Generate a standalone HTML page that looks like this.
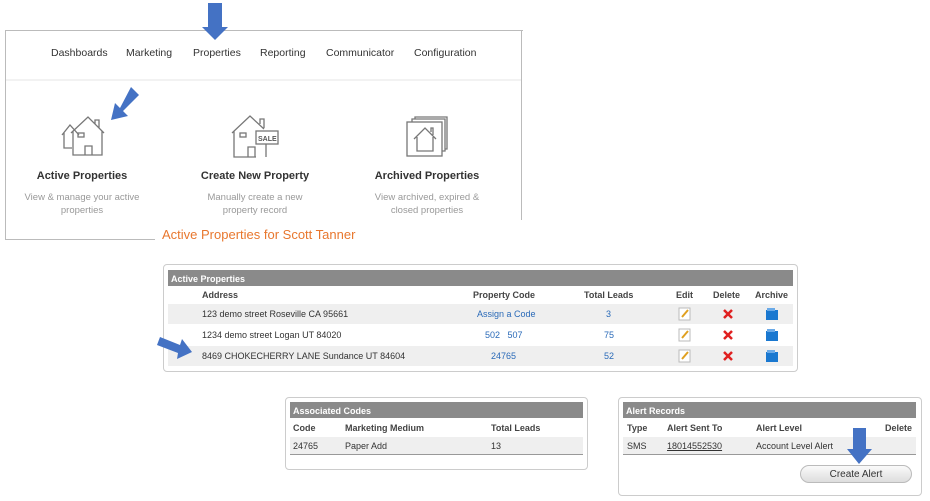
<!DOCTYPE html>
<html><head><meta charset="utf-8"><style>
*{margin:0;padding:0;box-sizing:border-box}
body{width:930px;height:501px;background:#fff;font-family:"Liberation Sans",sans-serif;position:relative;overflow:hidden;color:#333}
.a{position:absolute;white-space:nowrap}
.nav{font-size:10.5px;color:#333;top:47px}
.t{font-size:11px;font-weight:bold;color:#333;top:170px;text-align:center;width:160px}
.d{font-size:9.5px;color:#999;top:191px;text-align:center;width:160px;line-height:13px;white-space:normal}
.box{position:absolute;border:1px solid #ccc;border-radius:4px}
.bar{position:absolute;background:#8a8a8a;color:#fff;font-size:9px;font-weight:bold;padding:4px 3px;height:16px}
.s{font-size:9px;color:#333}
.h{font-size:9px;font-weight:bold;color:#444}
.l{color:#2a6ab8}
.row{position:absolute;background:#efefef}
</style></head><body>
<div style="position:absolute;left:5px;top:30px;width:518px;height:210px;border-top:1px solid #bbb;border-left:1px solid #bbb"></div>
<div style="position:absolute;left:521px;top:30px;width:1px;height:190px;background:#bbb"></div>
<div style="position:absolute;left:5px;top:239px;width:150px;height:1px;background:#bbb"></div>
<div style="position:absolute;left:6px;top:79px;width:515px;height:2px;background:#f2f2f2"></div>
<div class="a nav" style="left:51px">Dashboards</div>
<div class="a nav" style="left:126px">Marketing</div>
<div class="a nav" style="left:193px">Properties</div>
<div class="a nav" style="left:260px">Reporting</div>
<div class="a nav" style="left:326px">Communicator</div>
<div class="a nav" style="left:414px">Configuration</div>
<div class="a t" style="left:2px">Active Properties</div>
<div class="a t" style="left:175px">Create New Property</div>
<div class="a t" style="left:347px">Archived Properties</div>
<div class="a d" style="left:2px;padding:0 8px">View &amp; manage your active properties</div>
<div class="a d" style="left:175px;padding:0 24px">Manually create a new property record</div>
<div class="a d" style="left:347px;padding:0 16px">View archived, expired &amp; closed properties</div>
<div class="a" style="left:162px;top:227px;font-size:13px;color:#e8772e">Active Properties for Scott Tanner</div>

<div class="box" style="left:163px;top:264px;width:635px;height:108px"></div>
<div class="bar" style="left:168px;top:270px;width:625px">Active Properties</div>
<div class="a h" style="left:202px;top:290px">Address</div>
<div class="a h" style="left:473px;top:290px">Property Code</div>
<div class="a h" style="left:584px;top:290px">Total Leads</div>
<div class="a h" style="left:676px;top:290px">Edit</div>
<div class="a h" style="left:713px;top:290px">Delete</div>
<div class="a h" style="left:755px;top:290px">Archive</div>
<div class="row" style="left:168px;top:304px;width:625px;height:20px"></div>
<div class="row" style="left:168px;top:346px;width:625px;height:20px"></div>
<div class="a s" style="left:202px;top:309px">123 demo street Roseville CA 95661</div>
<div class="a s" style="left:202px;top:330px">1234 demo street Logan UT 84020</div>
<div class="a s" style="left:202px;top:351px">8469 CHOKECHERRY LANE Sundance UT 84604</div>
<div class="a s l" style="left:477px;top:309px">Assign a Code</div>
<div class="a s l" style="left:485px;top:330px">502&nbsp;&nbsp;&nbsp;507</div>
<div class="a s l" style="left:491px;top:351px">24765</div>
<div class="a s l" style="left:606px;top:309px">3</div>
<div class="a s l" style="left:604px;top:330px">75</div>
<div class="a s l" style="left:604px;top:351px">52</div>

<div class="box" style="left:285px;top:397px;width:303px;height:73px"></div>
<div class="bar" style="left:290px;top:402px;width:293px">Associated Codes</div>
<div class="a h" style="left:293px;top:423px">Code</div>
<div class="a h" style="left:345px;top:423px">Marketing Medium</div>
<div class="a h" style="left:491px;top:423px">Total Leads</div>
<div class="row" style="left:290px;top:437px;width:293px;height:18px;border-bottom:1px solid #999"></div>
<div class="a s" style="left:293px;top:441px">24765</div>
<div class="a s" style="left:345px;top:441px">Paper Add</div>
<div class="a s" style="left:491px;top:441px">13</div>

<div class="box" style="left:618px;top:397px;width:304px;height:99px"></div>
<div class="bar" style="left:623px;top:402px;width:293px">Alert Records</div>
<div class="a h" style="left:627px;top:423px">Type</div>
<div class="a h" style="left:667px;top:423px">Alert Sent To</div>
<div class="a h" style="left:756px;top:423px">Alert Level</div>
<div class="a h" style="left:885px;top:423px">Delete</div>
<div class="row" style="left:623px;top:437px;width:293px;height:18px;border-bottom:1px solid #999"></div>
<div class="a s" style="left:627px;top:441px">SMS</div>
<div class="a s" style="left:667px;top:441px;text-decoration:underline">18014552530</div>
<div class="a s" style="left:756px;top:441px">Account Level Alert</div>
<div class="a" style="left:800px;top:465px;width:112px;height:18px;border:1px solid #bbb;border-radius:9px;background:linear-gradient(#fafafa,#ddd);font-size:10px;text-align:center;line-height:17px;color:#333">Create Alert</div>

<svg width="930" height="501" style="position:absolute;left:0;top:0" fill="none">
<g stroke="#777" stroke-width="1.3">
<path d="M62 135 L70 125 L79 135 M64 133 V148 H72"/>
<path d="M71 133 L88 117 L104 133 M73 131 V155 H102 V131 M95 124 V120 H99 V128"/>
<rect x="78" y="133" width="6" height="4"/><path d="M85 155 V146 H92 V155"/>
<path d="M232 133 L250 116 L264 129 M234 131 V157 H256 M260 124 V119 H264 V128"/>
<rect x="240" y="133" width="6" height="4"/><path d="M248 157 V147 H255 V157"/>
<rect x="256" y="131" width="22" height="13"/><path d="M266 144 V157"/>
<rect x="407" y="122" width="35" height="34"/><path d="M412 122 V119 H445 V151 H442 M415 119 V117 H447 V149 H445"/>
<path d="M414 139 L425 128 L436 139 M417 137 V151 H433 V137 M431 132 V128 H433 V135"/>
</g>
<text x="258" y="141" font-size="7" font-weight="bold" fill="#555" font-family="Liberation Sans">SALE</text>
<g fill="#4472c4">
<path d="M208 3 H222 V27 H228 L215 40 L202 27 H208 Z"/>
<path d="M131 87 L139 95 L123 111 L128 116 L111 120 L115 103 L120 108 Z"/>
<path d="M157 345 L160 337 L180 345 L182 339 L192 352 L177 359 L178 353 Z"/>
<path d="M853 428 H866 V449 H872 L859 464 L847 449 H853 Z"/>
</g>
<g>
<rect x="679" y="308" width="11" height="12" fill="#fff" stroke="#bbb"/><path d="M682 317 L688 310" stroke="#e0a020" stroke-width="2"/>
<rect x="679" y="329" width="11" height="12" fill="#fff" stroke="#bbb"/><path d="M682 338 L688 331" stroke="#e0a020" stroke-width="2"/>
<rect x="679" y="350" width="11" height="12" fill="#fff" stroke="#bbb"/><path d="M682 359 L688 352" stroke="#e0a020" stroke-width="2"/>
<path d="M724 310 L732 318 M732 310 L724 318 M724 331 L732 339 M732 331 L724 339 M724 352 L732 360 M732 352 L724 360" stroke="#e02020" stroke-width="2.5"/>
<rect x="766" y="310" width="12" height="10" fill="#1a78d0"/><rect x="767" y="308" width="8" height="3" fill="#6aaae8"/>
<rect x="766" y="331" width="12" height="10" fill="#1a78d0"/><rect x="767" y="329" width="8" height="3" fill="#6aaae8"/>
<rect x="766" y="352" width="12" height="10" fill="#1a78d0"/><rect x="767" y="350" width="8" height="3" fill="#6aaae8"/>
</g>
</svg>
</body></html>
